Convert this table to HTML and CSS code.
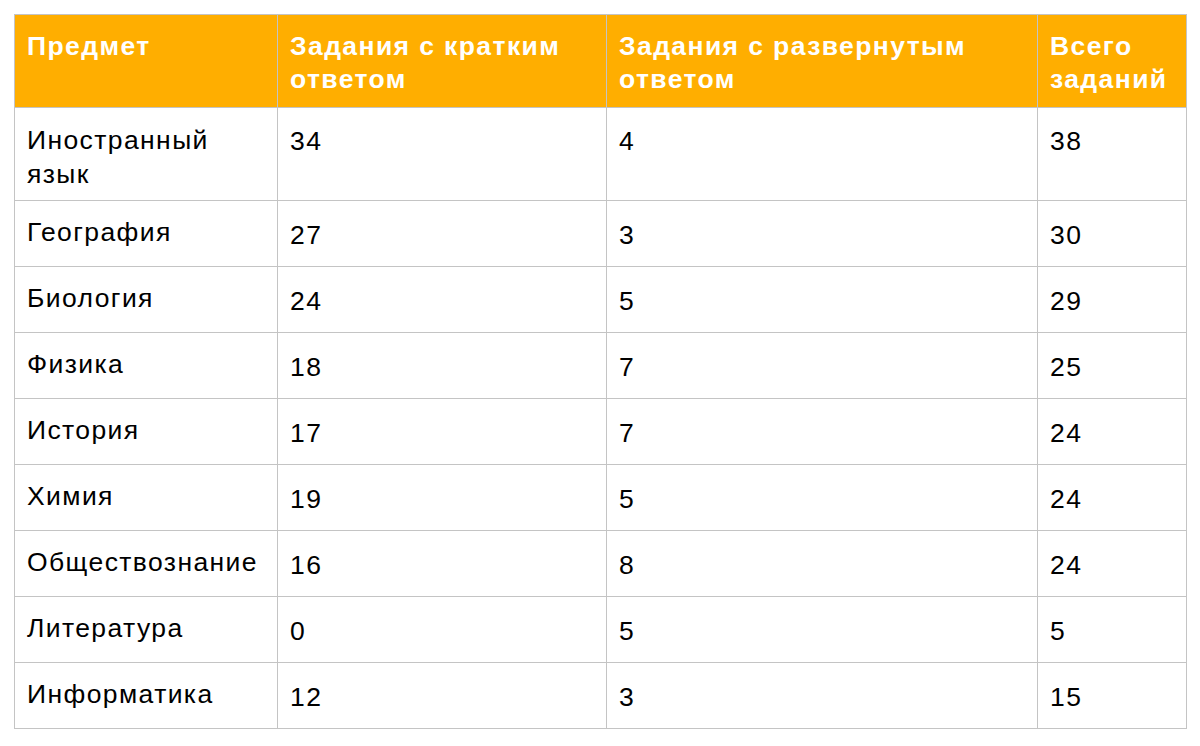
FILE: index.html
```html
<!DOCTYPE html>
<html lang="ru">
<head>
<meta charset="utf-8">
<title>Задания</title>
<link rel="stylesheet" href="styles.css">
</head>
<body>
<div class="wrap">
<table class="tbl">
<colgroup>
<col class="c1"><col class="c2"><col class="c3"><col class="c4">
</colgroup>
<thead>
<tr class="head">
<th>Предмет</th>
<th>Задания с кратким ответом</th>
<th>Задания с развернутым ответом</th>
<th>Всего заданий</th>
</tr>
</thead>
<tbody>
<tr class="tall"><td class="name">Иностранный язык</td><td class="num">34</td><td class="num">4</td><td class="num">38</td></tr>
<tr><td class="name">География</td><td class="num">27</td><td class="num">3</td><td class="num">30</td></tr>
<tr><td class="name">Биология</td><td class="num">24</td><td class="num">5</td><td class="num">29</td></tr>
<tr><td class="name">Физика</td><td class="num">18</td><td class="num">7</td><td class="num">25</td></tr>
<tr><td class="name">История</td><td class="num">17</td><td class="num">7</td><td class="num">24</td></tr>
<tr><td class="name">Химия</td><td class="num">19</td><td class="num">5</td><td class="num">24</td></tr>
<tr><td class="name">Обществознание</td><td class="num">16</td><td class="num">8</td><td class="num">24</td></tr>
<tr><td class="name">Литература</td><td class="num">0</td><td class="num">5</td><td class="num">5</td></tr>
<tr><td class="name">Информатика</td><td class="num">12</td><td class="num">3</td><td class="num">15</td></tr>
</tbody>
</table>
</div>
</body>
</html>
```
FILE: styles.css
```css
html, body {
  margin: 0;
  padding: 0;
  background: #ffffff;
}
.wrap {
  padding: 14px 0 0 14px;
}
.tbl {
  border-collapse: collapse;
  table-layout: fixed;
  width: 1172px;
  font-family: "Liberation Sans", Arial, sans-serif;
  font-size: 26.5px;
  line-height: 34px;
  letter-spacing: 1.4px;
  color: #000;
}
.c1 { width: 263px; }
.c2 { width: 329px; }
.c3 { width: 431px; }
.c4 { width: 149px; }
.tbl th, .tbl td {
  border: 1px solid #c4c4c4;
  text-align: left;
  vertical-align: top;
  padding: 14px 8px 0 12px;
}
.tbl th {
  background: #ffae00;
  color: #ffffff;
  font-weight: bold;
  font-size: 26.5px;
  letter-spacing: 1.4px;
  line-height: 33px;
  padding-top: 15px;
  padding-right: 4px;
}
.head { height: 93px; }
.tbl tbody tr { height: 66px; }
.tbl tbody tr.tall { height: 93px; }
.tbl td.num { padding-top: 17px; }
.tbl tr.tall td { padding-top: 15px; }
.tbl tr.tall td.num { padding-top: 16px; }
```
